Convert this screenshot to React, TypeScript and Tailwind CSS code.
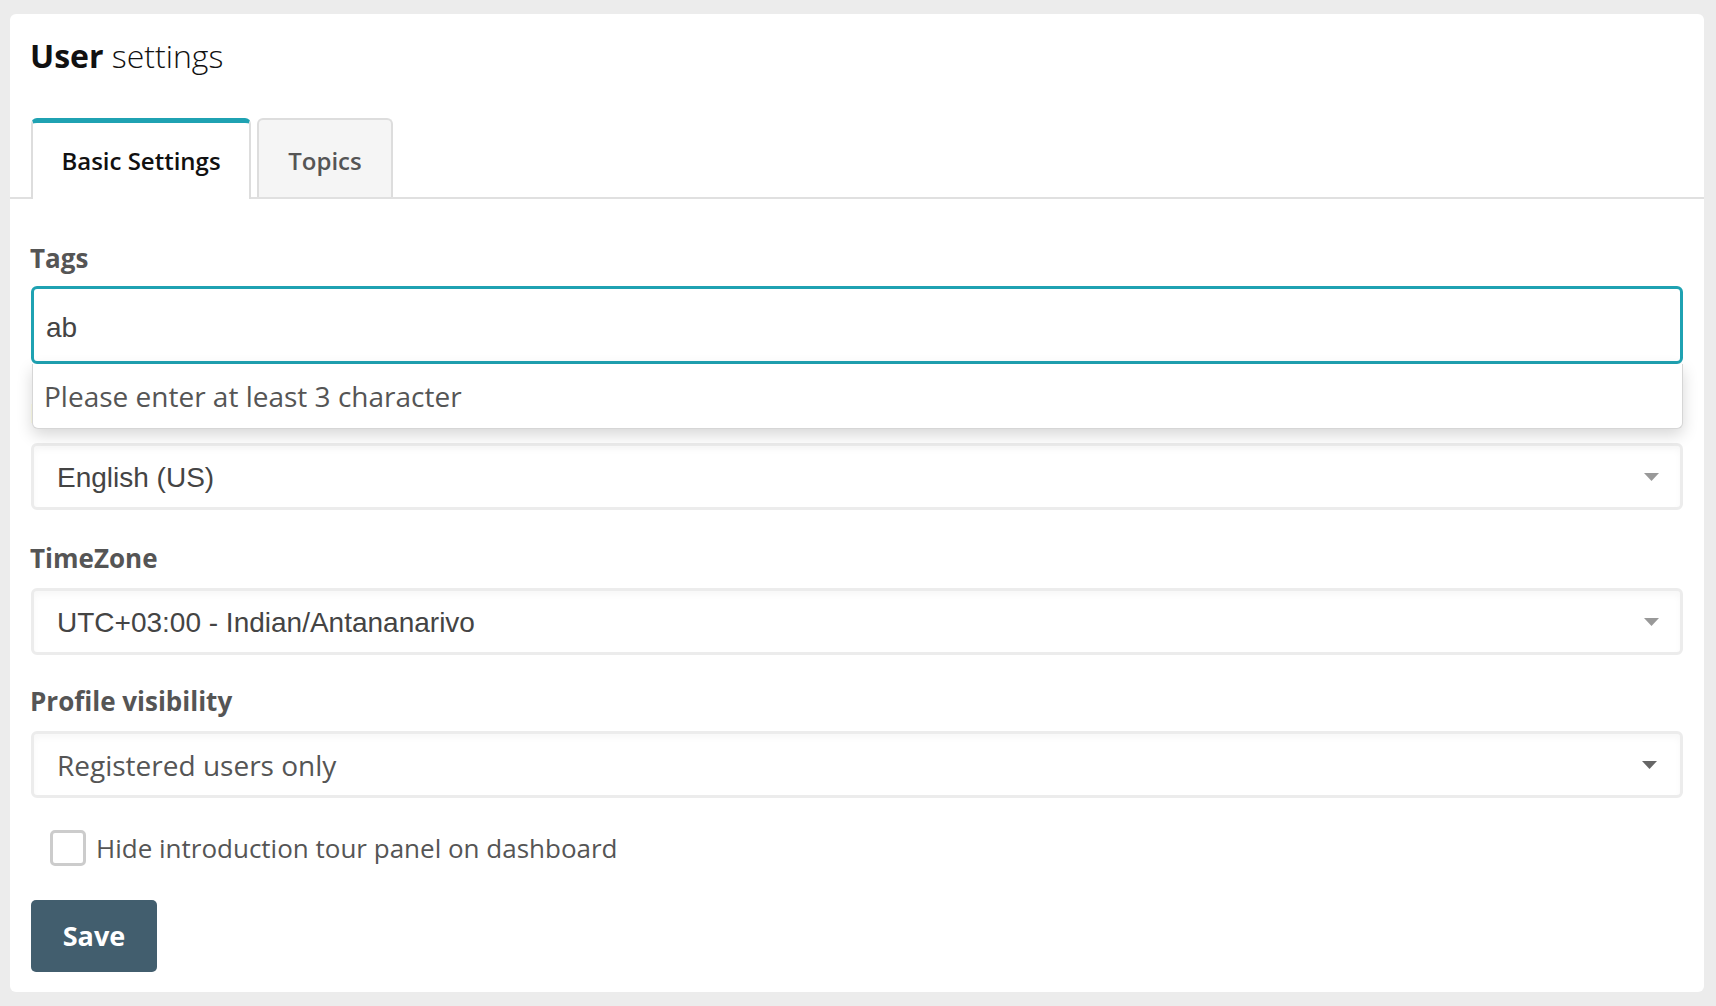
import React from "react";

function Caret({ color }: { color: string }) {
  return (
    <svg width="15" height="8" viewBox="0 0 15 8" className="shrink-0">
      <path d="M0 0 L15 0 L7.5 8 Z" fill={color} />
    </svg>
  );
}

function SelectBox({
  value,
  font,
  caret,
  caretPad,
}: {
  value: string;
  font: "sans" | "open";
  caret: string;
  caretPad: string;
}) {
  return (
    <div
      className={
        "flex h-[67px] w-full items-center justify-between rounded-[6px] border-[3px] border-[#ececec] bg-white pl-[23px] shadow-[inset_0_4px_6px_rgba(0,0,0,0.03)] " +
        caretPad
      }
    >
      <span
        className={
          font === "sans"
            ? "pt-[3px] font-['Liberation_Sans',Arial,sans-serif] text-[28px] text-[#444]"
            : "pt-[1px] font-['Open_Sans',sans-serif] text-[28px] text-[#555]"
        }
      >
        {value}
      </span>
      <Caret color={caret} />
    </div>
  );
}

function Label({ children }: { children: React.ReactNode }) {
  return (
    <div className="-ml-[1px] h-[36px] font-['Open_Sans',sans-serif] text-[26px] font-bold leading-[36px] text-[#555]">
      {children}
    </div>
  );
}

export default function App() {
  return (
    <div className="min-h-screen bg-[#ececec] pb-[14px] pl-[10px] pr-[12px] pt-[14px] font-['Open_Sans',sans-serif]">
      <div className="rounded-[6px] bg-white pb-[20px] pt-[22px]">
        <h1 className="h-[40px] pl-[20px] text-[32px] leading-[40px] text-[#111]">
          <span className="font-bold">User</span>
          <span className="font-light"> settings</span>
        </h1>

        <div className="mt-[42px] flex items-end gap-[6px] border-b-2 border-[#e0e0e0] pl-[21px]">
          <div className="-mb-[2px] flex h-[81px] w-[220px] items-center justify-center rounded-t-[6px] border-x-2 border-t-[5px] border-x-[#ddd] border-t-[#1fa2b2] bg-white text-[24px] font-semibold text-[#111]">
            Basic Settings
          </div>
          <div className="flex h-[79px] w-[136px] items-center justify-center rounded-t-[6px] border-x-2 border-t-2 border-[#ddd] bg-[#f5f5f5] pt-[5px] text-[24px] font-semibold text-[#555]">
            Topics
          </div>
        </div>

        <div className="flex flex-col px-[21px] pt-[41px]">
          <Label>Tags</Label>
          <div className="relative z-10 mt-[10px]">
            <div className="flex h-[78px] items-center rounded-[6px] border-[3px] border-[#1fa2b2] bg-white pl-[12px] pt-[5px] font-['Liberation_Sans',Arial,sans-serif] text-[28px] text-[#444]">
              ab
            </div>
            <div className="absolute left-[1px] right-0 top-[78px] flex h-[65px] items-center rounded-b-[6px] border-x border-b border-[#d6d6d6] bg-white pl-[11px] text-[28px] text-[#555] shadow-[0_6px_16px_rgba(0,0,0,0.16)]">
              Please enter at least 3 character
            </div>
          </div>

          <div className="mt-[31px]">
            <Label>Language</Label>
          </div>
          <div className="mt-[12px]">
            <SelectBox value="English (US)" font="sans" caret="#999" caretPad="pr-[21px]" />
          </div>

          <div className="mt-[30px]">
            <Label>TimeZone</Label>
          </div>
          <div className="mt-[12px]">
            <SelectBox value="UTC+03:00 - Indian/Antananarivo" font="sans" caret="#999" caretPad="pr-[21px]" />
          </div>

          <div className="mt-[28px]">
            <Label>Profile visibility</Label>
          </div>
          <div className="mt-[12px]">
            <SelectBox value="Registered users only" font="open" caret="#666" caretPad="pr-[23px]" />
          </div>

          <label className="mt-[32px] flex h-[36px] items-center pl-[19px]">
            <span className="h-[36px] w-[36px] rounded-[5px] border-[3px] border-[#cccccc] bg-white" />
            <span className="ml-[10px] text-[26px] text-[#555]">
              Hide introduction tour panel on dashboard
            </span>
          </label>

          <div className="mt-[34px]">
            <button className="flex h-[72px] w-[126px] items-center justify-center rounded-[5px] bg-[#425e6e] text-[27px] font-bold text-white">
              Save
            </button>
          </div>
        </div>
      </div>
    </div>
  );
}
